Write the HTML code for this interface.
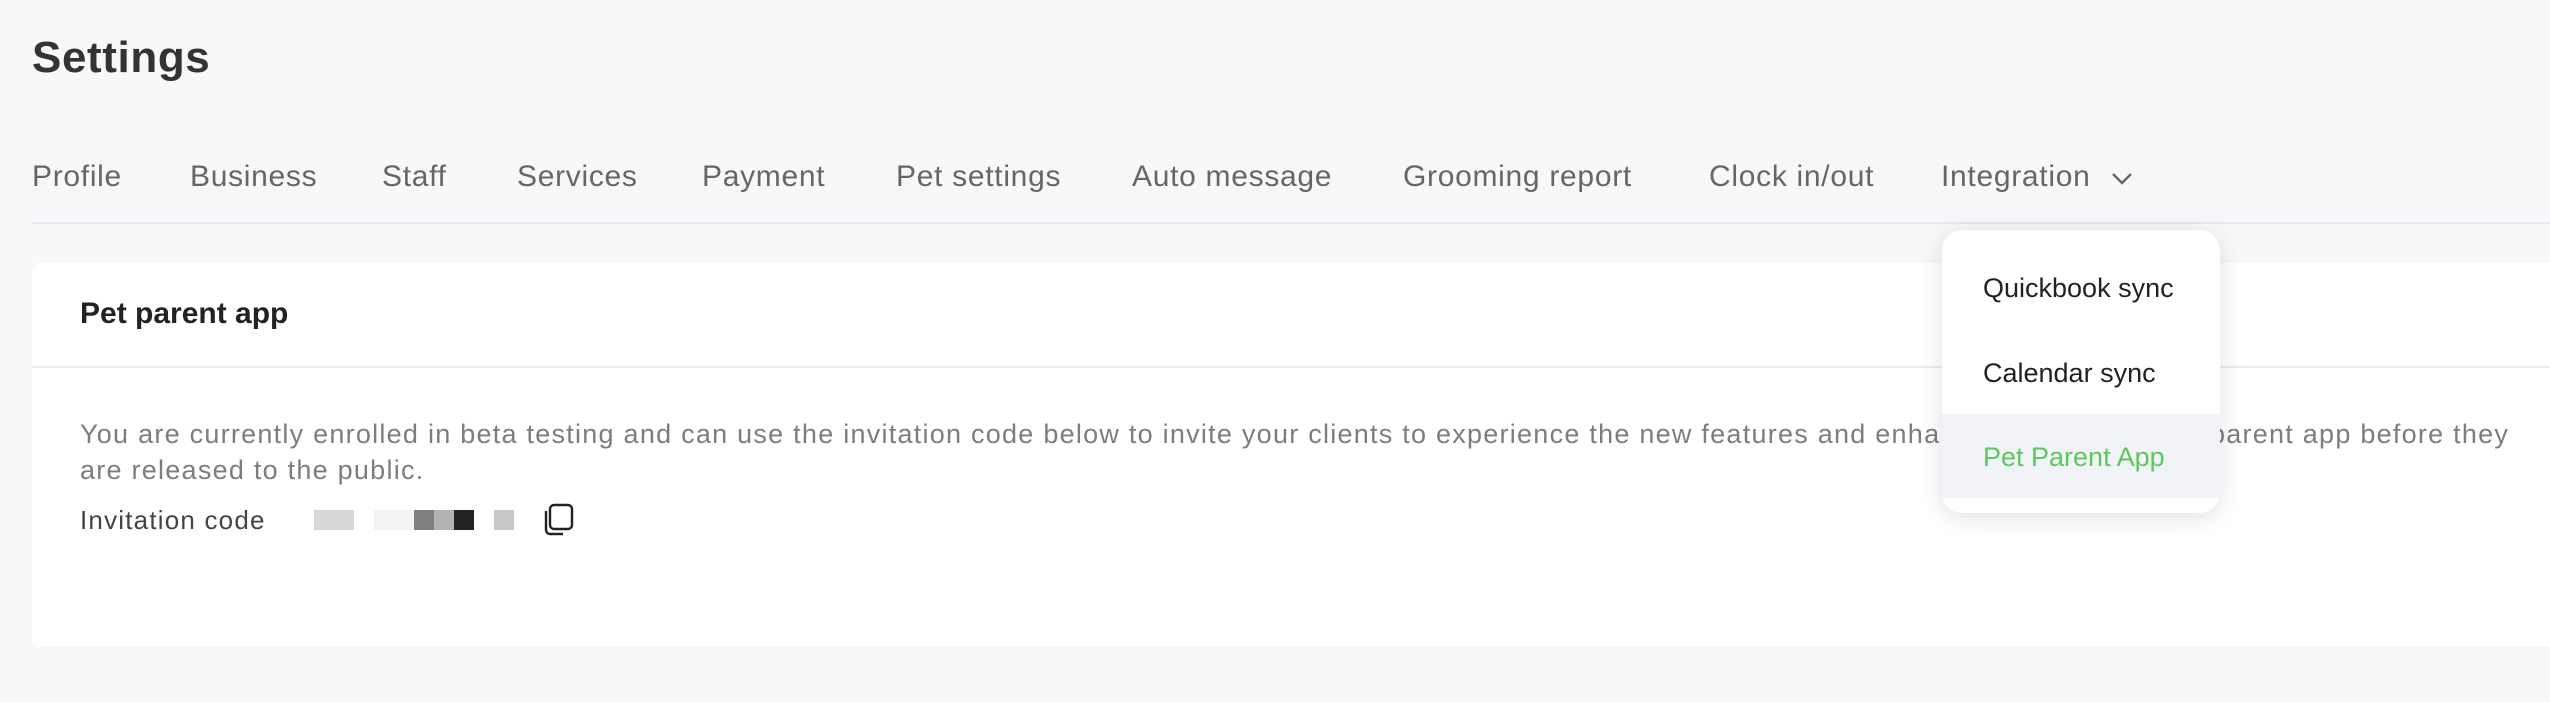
<!DOCTYPE html>
<html><head><meta charset="utf-8"><style>
*{margin:0;padding:0;box-sizing:border-box}
body{width:2550px;height:702px;background:#f7f8fa;font-family:"Liberation Sans",sans-serif;position:relative;overflow:hidden}
.a{position:absolute;white-space:nowrap}
.h1{left:32px;top:30px;font-size:44px;font-weight:bold;color:#333;line-height:56px;letter-spacing:0.6px}
.tab{top:159px;font-size:30px;color:#666;line-height:36px;letter-spacing:0.7px}
.line{left:32px;right:0;top:222px;height:2px;background:#e8e9ec}
.card{left:32px;top:263px;width:2560px;height:384px;background:#fff;border-radius:8px}
.cdiv{left:32px;right:0;top:366px;height:2px;background:#ececef}
.p{left:80px;font-size:27px;color:#7d7d7d;line-height:36px;letter-spacing:1.25px}
.dd{left:1942px;top:230px;width:278px;height:283px;background:#fff;border-radius:20px;box-shadow:0 4px 24px rgba(0,0,0,.12);overflow:hidden}
.it{position:absolute;left:41px;font-size:27px;color:#222;line-height:34px}
</style></head><body>
<div class="a h1">Settings</div>
<div class="a tab" style="left:32px">Profile</div>
<div class="a tab" style="left:190px">Business</div>
<div class="a tab" style="left:382px">Staff</div>
<div class="a tab" style="left:517px">Services</div>
<div class="a tab" style="left:702px">Payment</div>
<div class="a tab" style="left:896px">Pet settings</div>
<div class="a tab" style="left:1132px">Auto message</div>
<div class="a tab" style="left:1403px">Grooming report</div>
<div class="a tab" style="left:1709px">Clock in/out</div>
<div class="a tab" style="left:1941px">Integration</div>
<svg class="a" style="left:2110px;top:170px" width="24" height="16" viewBox="0 0 24 16"><path d="M3 4l9 9 9-9" fill="none" stroke="#666" stroke-width="2.4"/></svg>
<div class="a line"></div>
<div class="a card"></div>
<div class="a" style="left:80px;top:296px;font-size:30px;font-weight:bold;color:#222;line-height:36px">Pet parent app</div>
<div class="a cdiv"></div>
<div class="a p" style="top:416px">You are currently enrolled in beta testing and can use the invitation code below to invite your clients to experience the new features and enhancements of the pet parent app before they</div>
<div class="a p" style="top:452px">are released to the public.</div>
<div class="a" style="left:80px;top:503px;font-size:26px;color:#444;line-height:34px;letter-spacing:1.2px">Invitation code</div>
<div class="a" style="left:314px;top:510px;width:40px;height:20px;background:#d8d8d8"></div>
<div class="a" style="left:374px;top:510px;width:40px;height:20px;background:#f3f3f3"></div>
<div class="a" style="left:414px;top:510px;width:20px;height:20px;background:#808080"></div>
<div class="a" style="left:434px;top:510px;width:20px;height:20px;background:#b3b3b3"></div>
<div class="a" style="left:454px;top:510px;width:20px;height:20px;background:#222"></div>
<div class="a" style="left:494px;top:510px;width:20px;height:20px;background:#c8c8c8"></div>
<svg class="a" style="left:540px;top:503px" width="34" height="34" viewBox="0 0 34 34"><rect x="10" y="2" width="22" height="24" rx="4" fill="#fff" stroke="#222" stroke-width="2.4"/><path d="M6 8v19a4 4 0 0 0 4 4h13" fill="none" stroke="#222" stroke-width="2.4"/></svg>
<div class="a dd">
<div class="it" style="top:41px">Quickbook sync</div>
<div class="it" style="top:126px">Calendar sync</div>
<div style="position:absolute;left:0;right:0;top:184px;height:84px;background:#f2f3f6"></div>
<div class="it" style="top:210px;color:#5cc85c">Pet Parent App</div>
</div>
</body></html>
